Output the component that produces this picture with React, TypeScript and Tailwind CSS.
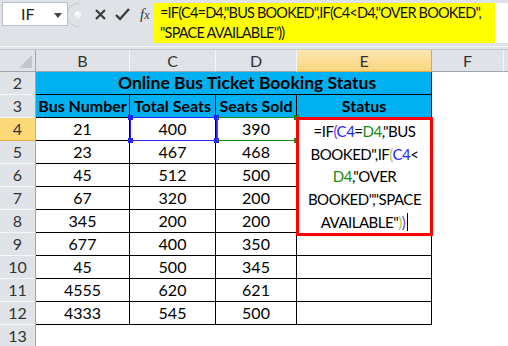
import React from "react";

const font = { fontFamily: "Lato, 'Noto Sans', sans-serif" };

const cols = [
  { key: "B", w: "w-[94px]" },
  { key: "C", w: "w-[86px]" },
  { key: "D", w: "w-[81px]" },
  { key: "E", w: "w-[135px]" },
  { key: "F", w: "w-[72px]" },
  { key: "", w: "w-[40px]" },
];

const data = [
  ["21", "400", "390"],
  ["23", "467", "468"],
  ["45", "512", "500"],
  ["67", "320", "200"],
  ["345", "200", "200"],
  ["677", "400", "350"],
  ["45", "500", "345"],
  ["4555", "620", "621"],
  ["4333", "545", "500"],
];

function RowHead({ n, active }: { n: number; active?: boolean }) {
  return (
    <div
      className={
        "w-[36px] shrink-0 flex items-center justify-center border-b border-r text-[16px] " +
        (active
          ? "bg-[#fcd877] border-b-[#e2a93c] border-r-[#e2a93c] text-[#333]"
          : "bg-[#dfe3e8] border-b-[#f4f6f8] border-r-[#9ea6b0] text-[#333]")
      }
    >
      {n}
    </div>
  );
}

function FormulaBar() {
  return (
    <div className="h-[50px] bg-[#dfe3e8] relative flex items-start border-b border-[#c3c8ce]">
      {/* name box */}
      <div className="mt-[2px] ml-[2px] w-[66px] h-[24px] bg-white border border-[#b8bec6] flex items-center relative">
        <span className="ml-[18px] text-[16px] text-[#222]">IF</span>
        <svg className="absolute right-[5px] top-[10px]" width="8" height="5" viewBox="0 0 8 5">
          <path d="M0 0 L8 0 L4 5 Z" fill="#444" />
        </svg>
      </div>
      {/* divider knob */}
      <svg className="mt-[2px] -ml-[1px]" width="18" height="26" viewBox="0 0 18 26">
        <path d="M12 1 A12 12 0 0 0 12 25" fill="none" stroke="#c4c9cf" strokeWidth="1" />
        <circle cx="11" cy="13" r="4.5" fill="#eef0f2" stroke="#d8dce0" />
        <circle cx="10" cy="11.5" r="2" fill="#ffffff" />
      </svg>
      {/* cancel / enter / fx */}
      <div className="flex items-center h-[28px] ml-[10px] gap-[9px]">
        <svg width="11" height="11" viewBox="0 0 11 11">
          <path d="M1 1 L10 10 M10 1 L1 10" stroke="#3c3c3c" strokeWidth="2.2" />
        </svg>
        <svg width="15" height="13" viewBox="0 0 15 13">
          <path d="M1 7 L5 11 L14 1" fill="none" stroke="#3c3c3c" strokeWidth="2.4" />
        </svg>
        <span className="italic text-[15px] text-[#333] ml-[1px]" style={{ fontFamily: "'Liberation Serif', serif" }}>
          f<span className="text-[12px]">x</span>
        </span>
      </div>
      {/* formula text */}
      <div className="absolute left-[153px] top-[3px] right-0 h-[40px] bg-white">
        <div className="w-[342px] h-[40px] bg-[#ffff00] pl-[7px] text-[14.5px] tracking-[-0.8px] leading-[20px] text-[#111] whitespace-nowrap">
          <div>=IF(C4=D4,"BUS BOOKED",IF(C4&lt;D4,"OVER BOOKED",</div>
          <div>"SPACE AVAILABLE"))</div>
        </div>
      </div>
      <div className="absolute left-0 right-0 top-[46px] h-px bg-[#f3f5f7]" />
    </div>
  );
}

function ColHeaders() {
  return (
    <div className="flex h-[22px]">
      <div className="w-[36px] shrink-0 bg-[#dfe3e8] border-r border-b border-[#9ea6b0] relative">
        <svg className="absolute right-[3px] bottom-[3px]" width="13" height="13" viewBox="0 0 13 13">
          <path d="M13 0 L13 13 L0 13 Z" fill="#c2c7cd" />
        </svg>
      </div>
      {cols.map((c, i) => (
        <div
          key={i}
          className={
            c.w +
            " shrink-0 flex items-center justify-center text-[16px] border-r border-b " +
            (c.key === "E"
              ? "bg-gradient-to-b from-[#fde6b0] to-[#f9d57f] border-r-[#e2a93c] border-b-[#e2a93c] text-[#333]"
              : "bg-[#dfe3e8] border-r-[#f4f6f8] border-b-[#9ea6b0] text-[#333]")
          }
        >
          {c.key}
        </div>
      ))}
    </div>
  );
}

function Ref({ c, children }: { c: string; children: React.ReactNode }) {
  return <span className={c}>{children}</span>;
}

export default function App() {
  return (
    <div className="w-[508px] h-[346px] overflow-hidden bg-white text-black" style={font}>
      <FormulaBar />
      <ColHeaders />
      <div className="relative">
        {/* row 2 title */}
        <div className="flex h-[23px]">
          <RowHead n={2} />
          <div className="w-[396px] shrink-0 bg-[#00b0f0] border-b border-r border-black flex items-center justify-center pl-[27px] font-bold text-[17.5px]">
            Online Bus Ticket Booking Status
          </div>
        </div>
        {/* row 3 headers */}
        <div className="flex h-[23px]">
          <RowHead n={3} />
          {["Bus Number", "Total Seats", "Seats Sold", "Status"].map((h, i) => (
            <div
              key={h}
              className={
                cols[i].w +
                " shrink-0 bg-[#00b0f0] border-b border-r border-black flex items-center justify-center font-bold text-[16px] whitespace-nowrap"
              }
            >
              {h}
            </div>
          ))}
        </div>
        {data.map((r, i) => (
          <div key={i} className="flex h-[23px]">
            <RowHead n={i + 4} active={i === 0} />
            {r.map((v, j) => (
              <div
                key={j}
                className={cols[j].w + " shrink-0 border-b border-r border-black flex items-center justify-center text-[16px]"}
              >
                {v}
              </div>
            ))}
            <div className={cols[3].w + " shrink-0 border-b border-r border-black"} />
          </div>
        ))}
        <div className="flex h-[23px]">
          <RowHead n={13} />
        </div>

        {/* C4 blue reference box */}
        <div className="absolute left-[130px] top-[45px] w-[87px] h-[24px] border-[1.5px] border-[#2424ff]">
          <div className="absolute -left-[3px] -top-[3px] w-[5px] h-[5px] bg-[#2424ff]" />
          <div className="absolute -right-[3px] -top-[3px] w-[5px] h-[5px] bg-[#2424ff]" />
          <div className="absolute -left-[3px] -bottom-[3px] w-[5px] h-[5px] bg-[#2424ff]" />
          <div className="absolute -right-[3px] -bottom-[3px] w-[5px] h-[5px] bg-[#2424ff]" />
        </div>
        {/* D4 green reference box */}
        <div className="absolute left-[217px] top-[45px] w-[80px] h-[24px] border-[1.5px] border-[#148c14]">
          <div className="absolute -right-[3px] -top-[3px] w-[5px] h-[5px] bg-[#148c14]" />
          <div className="absolute -right-[3px] -bottom-[3px] w-[5px] h-[5px] bg-[#148c14]" />
        </div>

        {/* editing cell E4 with red highlight */}
        <div className="absolute left-[296px] top-[45px] w-[137px] h-[119px] bg-white border-[3px] border-[#ff0000] flex flex-col items-center text-[15px] tracking-[-0.5px] leading-[22.7px] whitespace-nowrap">
          <div>
            =IF<Ref c="text-[#8a2be2]">(</Ref>
            <Ref c="text-[#2424ff]">C4</Ref>=<Ref c="text-[#148c14]">D4</Ref>,"BUS
          </div>
          <div>
            BOOKED",IF<Ref c="text-[#9acd32]">(</Ref>
            <Ref c="text-[#2424ff]">C4</Ref>&lt;
          </div>
          <div>
            <Ref c="text-[#148c14]">D4</Ref>,"OVER
          </div>
          <div>BOOKED","SPACE</div>
          <div className="flex items-center">
            AVAILABLE"<Ref c="text-[#9acd32]">)</Ref>
            <Ref c="text-[#8a2be2]">)</Ref>
            <span className="inline-block w-px h-[18px] bg-black ml-[2px]" />
          </div>
        </div>
      </div>
    </div>
  );
}
